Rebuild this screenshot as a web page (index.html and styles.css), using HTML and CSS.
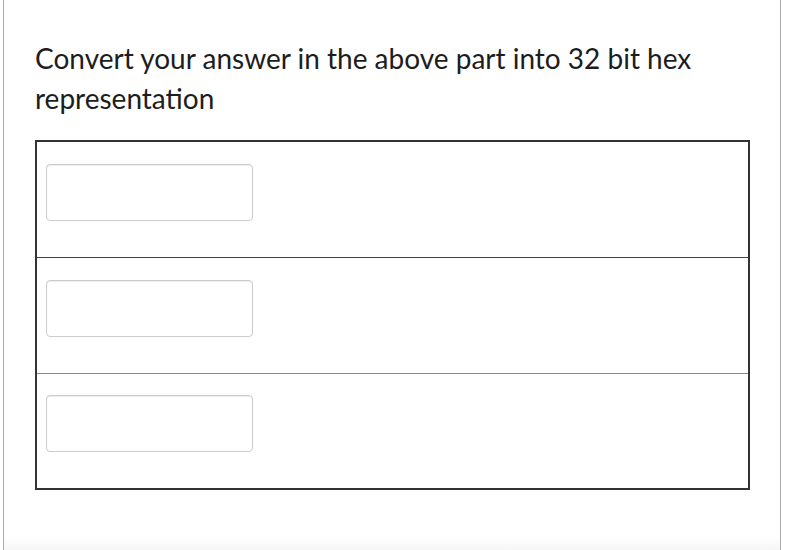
FILE: index.html
```html
<!DOCTYPE html>
<html lang="en">
<head>
<meta charset="utf-8">
<title>Question</title>
<link rel="stylesheet" href="styles.css">
</head>
<body>
<div class="question">
  <p class="prompt">Convert your answer in the above part into 32 bit hex representation</p>
  <div class="answer-table">
    <div class="answer-row"><input class="answer-input" type="text" aria-label="Answer 1"></div>
    <div class="answer-row"><input class="answer-input" type="text" aria-label="Answer 2"></div>
    <div class="answer-row"><input class="answer-input" type="text" aria-label="Answer 3"></div>
  </div>
</div>
</body>
</html>
```
FILE: styles.css
```css
html, body {
  margin: 0;
  padding: 0;
  background: #ffffff;
}

.question {
  box-sizing: border-box;
  margin-left: 3px;
  width: 778px;
  height: 550px;
  border-left: 1px solid #ababab;
  border-right: 1px solid #ababab;
  padding: 38px 30px 0 31px;
  background: linear-gradient(to bottom, #ffffff 0, #ffffff 536px, #f6f6f6 550px);
  font-family: Lato, "Open Sans", sans-serif;
  color: #1d1d1d;
}

.prompt {
  margin: 0;
  font-size: 28px;
  line-height: 40px;
  padding-right: 40px;
}

.answer-table {
  box-sizing: border-box;
  margin-top: 22px;
  width: 715px;
  border: 2px solid #333333;
  display: flex;
  flex-direction: column;
}

.answer-row {
  padding: 22px 9px 36px;
  border-bottom: 1px solid #444444;
}

.answer-row:nth-child(2) {
  border-bottom-color: #8a8a8a;
}

.answer-row:last-child {
  border-bottom: none;
  padding-top: 21px;
}

.answer-input {
  display: block;
  box-sizing: border-box;
  margin: 0;
  width: 207px;
  height: 57px;
  border: 1px solid #cccccc;
  border-radius: 4px;
  background: #ffffff;
  box-shadow: inset 0 1px 1px rgba(0, 0, 0, 0.075);
  font-family: Lato, sans-serif;
  font-size: 16px;
  padding: 4px 8px;
}
```
